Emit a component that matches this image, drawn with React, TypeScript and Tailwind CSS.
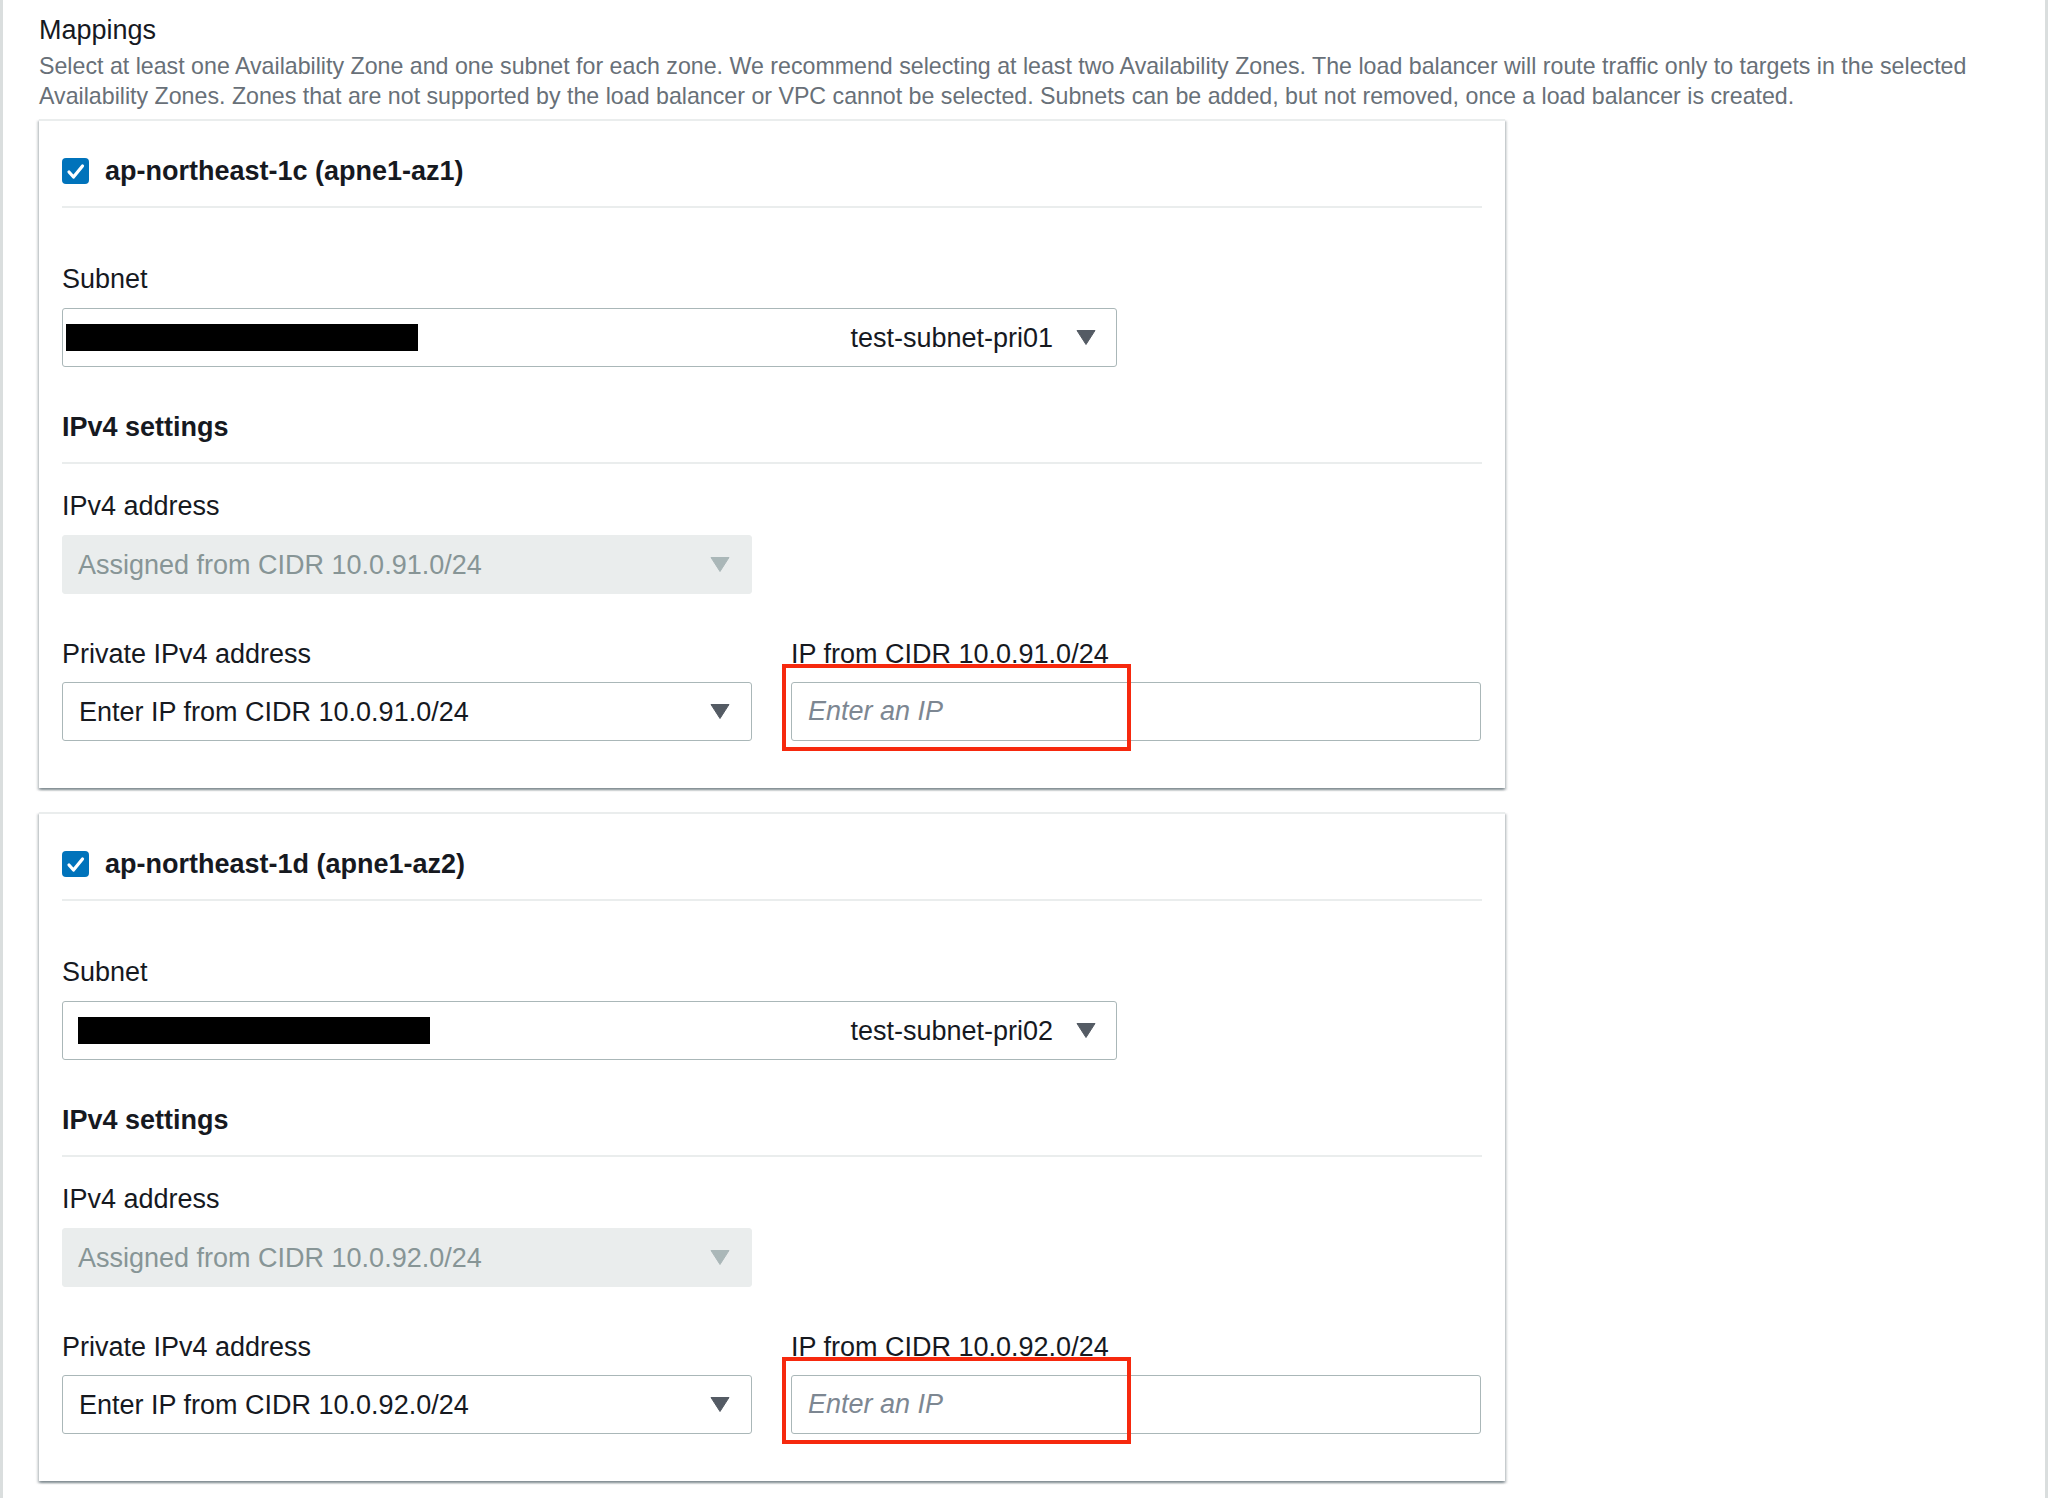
import React from 'react';

const font = "font-['Liberation_Sans',Arial,sans-serif]";

function Caret({ color }: { color: string }) {
  return (
    <svg width="20" height="15" viewBox="0 0 20 15" className="shrink-0">
      <path d="M1 0.5H19L10 14.5Z" fill={color} stroke={color} strokeLinejoin="round" />
    </svg>
  );
}

function Checkbox() {
  return (
    <div className="w-[27px] h-[26px] rounded-[4px] bg-[#0073bb] flex items-center justify-center shrink-0">
      <svg width="19" height="17" viewBox="0 0 19 17">
        <path d="M3 9l4.5 5L16.5 3" fill="none" stroke="#ffffff" strokeWidth="3.2" strokeLinecap="round" strokeLinejoin="round" />
      </svg>
    </div>
  );
}

type ZoneProps = {
  zone: string;
  subnet: string;
  cidr: string;
  redactPad: string;
};

function ZoneCard({ zone, subnet, cidr, redactPad }: ZoneProps) {
  return (
    <div className="w-[1466px] bg-white border-t-2 border-[#eaeded] px-[23px] pt-[37px] pb-[47px] shadow-[0_2px_2px_0_rgba(0,28,36,0.3),2px_2px_2px_0_rgba(0,28,36,0.15),-2px_2px_2px_0_rgba(0,28,36,0.15)]">
      {/* zone header */}
      <div className="flex items-center gap-[16px] h-[26px]">
        <Checkbox />
        <span className="text-[27px] leading-[30px] font-bold text-[#16191f]">{zone}</span>
      </div>
      <div className="h-[2px] bg-[#eaeded] mt-[22px]" />

      {/* subnet */}
      <div className="mt-[56px] text-[27px] leading-[30px] text-[#16191f]">Subnet</div>
      <div className={`mt-[14px] w-[1055px] h-[59px] flex items-center border border-[#aab7b8] rounded-[3px] pr-[20px] ${redactPad}`}>
        <div className="w-[352px] h-[27px] bg-black" />
        <div className="flex-1" />
        <span className="text-[27px] leading-[30px] text-[#16191f]">{subnet}</span>
        <div className="ml-[23px]">
          <Caret color="#545b64" />
        </div>
      </div>

      {/* IPv4 settings */}
      <div className="mt-[45px] text-[27px] leading-[30px] font-bold text-[#16191f]">IPv4 settings</div>
      <div className="h-[2px] bg-[#eaeded] mt-[20px]" />

      <div className="mt-[27px] text-[27px] leading-[30px] text-[#16191f]">IPv4 address</div>
      <div className="mt-[14px] w-[690px] h-[59px] flex items-center justify-between bg-[#eaeded] border border-[#eaeded] rounded-[3px] pl-[15px] pr-[21px]">
        <span className="text-[27px] leading-[30px] text-[#879596]">Assigned from CIDR {cidr}</span>
        <Caret color="#aab7b8" />
      </div>

      <div className="mt-[45px] grid grid-cols-[690px_690px] gap-x-[39px]">
        <div>
          <div className="text-[27px] leading-[30px] text-[#16191f]">Private IPv4 address</div>
          <div className="mt-[13px] h-[59px] flex items-center justify-between border border-[#aab7b8] rounded-[3px] pl-[16px] pr-[21px]">
            <span className="text-[27px] leading-[30px] text-[#16191f]">Enter IP from CIDR {cidr}</span>
            <Caret color="#545b64" />
          </div>
        </div>
        <div>
          <div className="text-[27px] leading-[30px] text-[#16191f]">IP from CIDR {cidr}</div>
          <div className="relative mt-[13px]">
            <input
              placeholder="Enter an IP"
              className={`w-full h-[59px] border border-[#aab7b8] rounded-[3px] pl-[16px] text-[27px] text-[#16191f] outline-none placeholder:italic placeholder:text-[#7d8792] ${font}`}
            />
            {/* annotation */}
            <div className="absolute left-[-9px] top-[-18px] w-[349px] h-[87px] border-[4px] border-[#f6290e] pointer-events-none" />
          </div>
        </div>
      </div>
    </div>
  );
}

export default function App() {
  return (
    <div className={`w-[2048px] min-h-[1498px] bg-white border-x-[3px] border-[#dadede] px-[36px] pt-[15px] ${font}`}>
      <div className="text-[27px] leading-[30px] text-[#16191f]">Mappings</div>
      <p className="mt-[6px] text-[23.2px] leading-[30px] text-[#687078]">
        Select at least one Availability Zone and one subnet for each zone. We recommend selecting at least two Availability Zones. The load balancer will route traffic only to targets in the selected Availability Zones. Zones that are not supported by the load balancer or VPC cannot be selected. Subnets can be added, but not removed, once a load balancer is created.
      </p>

      <div className="mt-[8px] flex flex-col gap-[24px]">
        <ZoneCard zone="ap-northeast-1c (apne1-az1)" subnet="test-subnet-pri01" cidr="10.0.91.0/24" redactPad="pl-[3px]" />
        <ZoneCard zone="ap-northeast-1d (apne1-az2)" subnet="test-subnet-pri02" cidr="10.0.92.0/24" redactPad="pl-[15px]" />
      </div>
    </div>
  );
}
